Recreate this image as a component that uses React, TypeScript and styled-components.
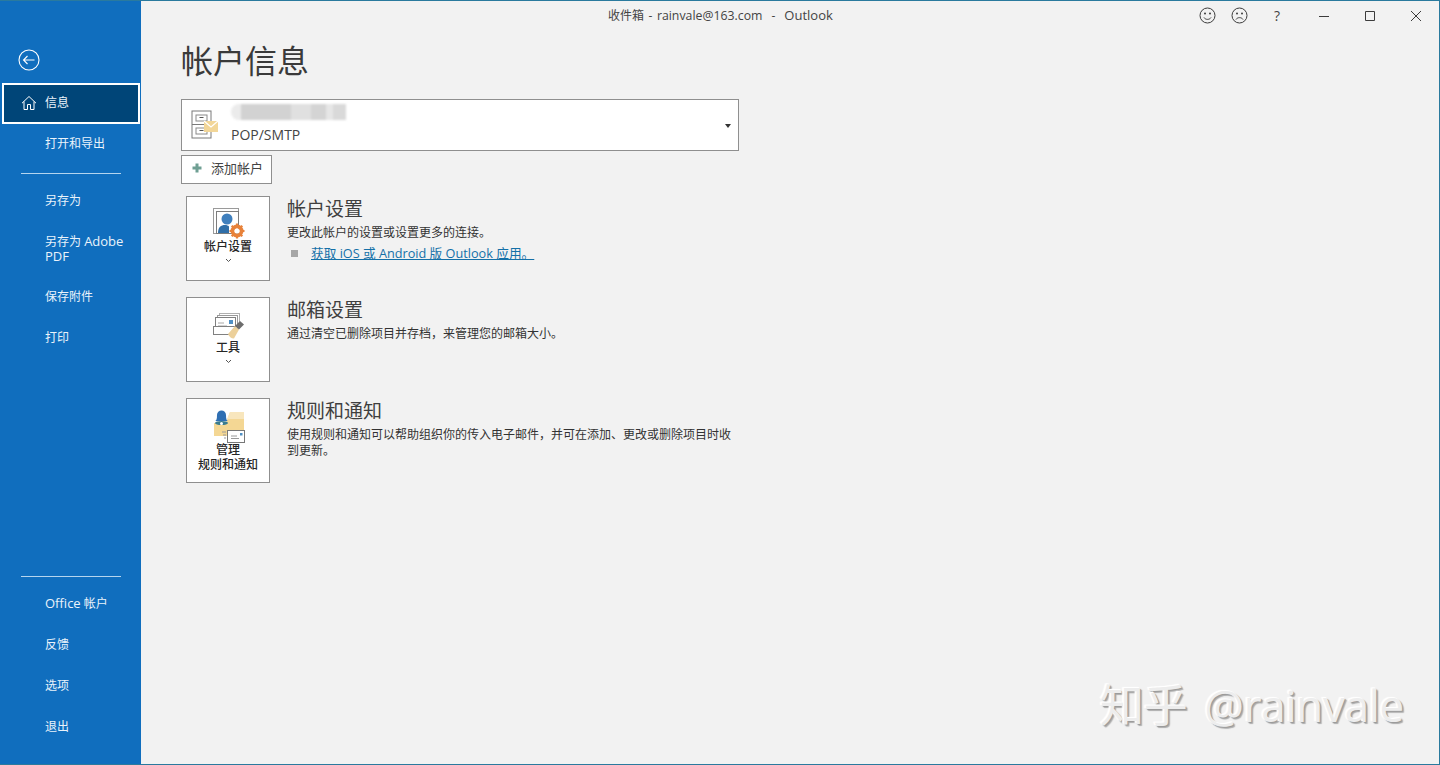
import React from "react";
import styled, { createGlobalStyle } from "styled-components";

const Global = createGlobalStyle`
  html, body { margin: 0; padding: 0; height: 100%; overflow: hidden; background: #f2f2f2; }
  #root { height: 100%; }
  * { box-sizing: border-box; }
`;

const FONT = `"Open Sans", "Noto Sans CJK SC", sans-serif`;

const Window = styled.div`
  position: relative;
  display: flex;
  width: 1440px;
  height: 765px;
  border: 1px solid #2a7a9e;
  border-left: 0;
  font-family: ${FONT};
  font-size: 12px;
  color: #444;
  background: #f2f2f2;
`;

const Sidebar = styled.nav`
  width: 141px;
  flex: none;
  display: flex;
  flex-direction: column;
  justify-content: space-between;
  padding-bottom: 16px;
  background: #106ebe;
  color: #fff;
`;

const SideGroup = styled.div`
  display: flex;
  flex-direction: column;
`;

const BackButton = styled.div`
  display: flex;
  align-items: center;
  height: 82px;
  padding: 36px 0 0 18px;
`;

const NavItem = styled.div<{ $active?: boolean }>`
  display: flex;
  align-items: center;
  gap: 8px;
  min-height: 41px;
  margin: 0 1px 0 2px;
  padding: 0 10px 2px ${(p) => (p.$active ? "17px" : "43px")};
  font-size: 12px;
  line-height: 15px;
  color: #eaf3fb;
  background: ${(p) => (p.$active ? "#004578" : "transparent")};
  border: ${(p) => (p.$active ? "2px solid #fff" : "0")};
`;

const TallNavItem = styled(NavItem)`
  display: block;
  min-height: 55px;
  padding-top: 12px;
  padding-right: 0;
`;

const Latin = styled.span<{ $size?: number }>`
  font-size: ${(p) => p.$size ?? 13}px;
`;

const NavLine = styled.span`
  display: block;
  height: 15px;
  line-height: 15px;
  white-space: pre;
`;

const Divider = styled.hr<{ $top?: number; $bottom?: number }>`
  width: 100px;
  height: 1px;
  margin: ${(p) => p.$top ?? 8}px 0 ${(p) => p.$bottom ?? 6}px 21px;
  border: 0;
  background: #b5d5ef;
`;

const Main = styled.main`
  flex: 1;
  min-width: 0;
  display: flex;
  flex-direction: column;
`;

const TitleBar = styled.header`
  display: flex;
  align-items: center;
  height: 29px;
  padding-left: 467px;
  color: #444;
`;

const WindowTitle = styled.span`
  width: 583px;
  flex: none;
  font-size: 12px;
  word-spacing: 1.4px;
  white-space: pre;
  padding-bottom: 2px;
`;

const Controls = styled.div`
  display: flex;
  align-items: center;
`;

const ControlCell = styled.span<{ $w: number }>`
  width: ${(p) => p.$w}px;
  height: 29px;
  display: flex;
  align-items: center;
  justify-content: center;
  color: #444;
  font-size: 14px;
`;

const Content = styled.div`
  padding: 0 0 0 40px;
  display: flex;
  flex-direction: column;
  align-items: flex-start;
`;

const PageTitle = styled.h1`
  margin: 7px 0 14px;
  font-size: 32px;
  line-height: 48px;
  font-weight: 400;
  color: #3a3a3a;
`;

const AccountSelect = styled.div`
  position: relative;
  display: flex;
  align-items: center;
  width: 558px;
  height: 52px;
  padding-left: 9px;
  background: #fff;
  border: 1px solid #8f8f8f;
`;

const AccountText = styled.div`
  margin-left: 12px;
  display: flex;
  flex-direction: column;
  gap: 6px;
  padding-bottom: 3px;
`;

const Redacted = styled.div`
  display: flex;
  height: 16px;
  width: 115px;
  border-radius: 8px 0 0 8px;
  overflow: hidden;
  filter: blur(0.8px);
`;

const RedactedCell = styled.span<{ $w: number; $c: string }>`
  width: ${(p) => p.$w}px;
  background: ${(p) => p.$c};
`;

const AccountType = styled.div`
  font-size: 14px;
  line-height: 18px;
  color: #444;
`;

const Caret = styled.span`
  position: absolute;
  right: 7px;
  top: 24px;
  border-left: 3.5px solid transparent;
  border-right: 3.5px solid transparent;
  border-top: 4px solid #333;
`;

const AddButton = styled.div`
  display: flex;
  align-items: center;
  width: 91px;
  height: 29px;
  margin: 4px 0 12px;
  padding: 0 0 4px 10px;
  gap: 9px;
  background: #fff;
  border: 1px solid #8f8f8f;
  font-size: 13px;
  color: #444;
`;

const SectionList = styled.div`
  display: flex;
  flex-direction: column;
  gap: 16px;
  margin-left: 5px;
`;

const Section = styled.section`
  display: flex;
  gap: 17px;
`;

const Tile = styled.div<{ $pad: number }>`
  flex: none;
  width: 84px;
  height: 85px;
  display: flex;
  flex-direction: column;
  align-items: center;
  padding-top: ${(p) => p.$pad}px;
  background: #fff;
  border: 1px solid #8f8f8f;
  color: #262626;
`;

const TileIcon = styled.div`
  margin-left: 2px;
  line-height: 0;
`;

const TileLabel = styled.div`
  font-size: 12px;
  line-height: 15px;
  font-weight: 500;
  text-align: center;
  white-space: pre-line;
  margin-top: -1px;
`;

const Chevron = styled.svg`
  margin-top: 4px;
  display: block;
`;

const SectionBody = styled.div`
  width: 450px;
  padding-top: 1px;
`;

const SectionHeading = styled.h2`
  margin: 0 0 4px;
  font-size: 19px;
  line-height: 24px;
  font-weight: 400;
  color: #3f3f3f;
`;

const Description = styled.p`
  margin: 0;
  font-size: 12px;
  line-height: 16px;
  color: #333;
`;

const LinkRow = styled.div`
  display: flex;
  align-items: center;
  gap: 13px;
  margin: 4px 0 0 4px;
`;

const Bullet = styled.span`
  width: 7px;
  height: 7px;
  background: #a6a6a6;
`;

const Link = styled.a`
  font-size: 12.7px;
  line-height: 16px;
  color: #1470a8;
  text-decoration: underline;
`;

const Watermark = styled.div`
  position: absolute;
  right: 35px;
  top: 676px;
  font-size: 44px;
  line-height: 56px;
  font-weight: 400;
  white-space: pre;
  color: #ededed;
  letter-spacing: -0.3px;
  word-spacing: 6px;
  text-shadow: -1px -1px 0 #fff, -2px -1px 1px #fff, 1px 1px 1px #999, 2px 2px 1px #b0b0b0;
`;

const NAV_MID = ["保存附件", "打印"];
const NAV_BOTTOM = ["反馈", "选项", "退出"];

const ChevronIcon = () => (
  <Chevron width="7" height="5" viewBox="0 0 7 5">
    <path d="M1 1l2.5 2.5L6 1" fill="none" stroke="#555" strokeWidth="1" />
  </Chevron>
);

const BackIcon = () => (
  <svg width="22" height="22" viewBox="0 0 22 22" fill="none" stroke="#fff" strokeWidth="1.1">
    <circle cx="11" cy="11" r="10" />
    <path d="M5.5 11h11M9.5 7l-4 4 4 4" />
  </svg>
);

const HomeIcon = () => (
  <svg width="16" height="16" viewBox="0 0 16 16" fill="none" stroke="#fff" strokeWidth="1">
    <path d="M1 8.200L8 1.500l7 6.700M3 6.500v8h3.500v-5h3v5H13v-8" />
  </svg>
);

const FileMailIcon = () => (
  <svg width="28" height="30" viewBox="0 0 28 30">
    <rect x="1" y="1" width="19" height="27" fill="#fff" stroke="#7a7a7a" />
    <path d="M1 14.500h19" stroke="#7a7a7a" />
    <rect x="5" y="5" width="11" height="6" fill="none" stroke="#8a8a8a" />
    <rect x="5" y="18" width="11" height="6" fill="none" stroke="#8a8a8a" />
    <path d="M8.500 7.500h4M8.500 20.500h4" stroke="#555" />
    <rect x="13" y="11" width="14" height="11" fill="#f2d698" />
    <path d="M13 11l7 6 7-6" fill="none" stroke="#fff" strokeWidth="1.200" />
  </svg>
);

const PlusIcon = () => (
  <svg width="10" height="10" viewBox="0 0 10 10">
    <path d="M3.500 0.500h3v3h3v3h-3v3h-3v-3h-3v-3h3z" fill="#6f9f93" />
  </svg>
);

const AccountIcon = () => (
  <svg width="32" height="32" viewBox="0 0 32 32">
    <rect x="0.500" y="0.500" width="25" height="25" fill="#fff" stroke="#9a9a9a" />
    <rect x="3.500" y="3.500" width="22" height="22" fill="#fff" stroke="#7d7d7d" />
    <circle cx="14" cy="11" r="5.500" fill="#3f7fbd" />
    <path d="M5 25c0-6 3-8 7-8 2 0 3 .500 4 1.500V25z" fill="#2f6ea8" />
    <circle cx="24" cy="23" r="4.500" fill="none" stroke="#e8823a" strokeWidth="4" />
    <path d="M24 15.500v15M16.500 23h15M18.700 17.700l10.600 10.600M29.300 17.700L18.700 28.300" stroke="#e8823a" strokeWidth="2.200" strokeDasharray="3 9 3" />
    <circle cx="24" cy="23" r="2.500" fill="#fff" />
  </svg>
);

const ToolsIcon = () => (
  <svg width="32" height="28" viewBox="0 0 32 28">
    <rect x="6.500" y="0.500" width="20" height="14" fill="#fff" stroke="#b0b0b0" />
    <rect x="4.500" y="2.500" width="20" height="14" fill="#fff" stroke="#9a9a9a" />
    <rect x="2.500" y="4.500" width="20" height="14" fill="#fff" stroke="#808080" />
    <rect x="16" y="7" width="4" height="4" fill="#4f8fc4" />
    <path d="M5 10h6M5 13h9" stroke="#a8a8a8" />
    <rect x="0.500" y="13.500" width="22" height="8" fill="#fff" stroke="#808080" />
    <path d="M15 21l7-8 4 3.500-5 9c-3 0-5-2-6-4.500z" fill="#ecd09a" />
    <path d="M22 13l5-5 4 3.500-5 5z" fill="#6d6d6d" />
  </svg>
);

const RulesIcon = () => (
  <svg width="32" height="34" viewBox="0 0 32 34">
    <path d="M1 14h12l4-11h14v24H1z" fill="#f4d794" />
    <path d="M17 3h14v7H14z" fill="#f8e6bd" />
    <path d="M1.500 12c2 0 2.500-2 2.500-6a4.500 4.500 0 0 1 9 0c0 4 .500 6 2.500 6z" fill="#2f6fb3" />
    <ellipse cx="8.500" cy="14" rx="6.500" ry="2" fill="#3a7c8f" />
    <circle cx="8.500" cy="14.500" r="1.500" fill="#fff" />
    <rect x="14.500" y="21.500" width="17" height="12" fill="#fff" stroke="#777" />
    <rect x="27" y="24" width="2.500" height="2.500" fill="#4f8fc4" />
    <path d="M18 27h6M18 29.500h8M9 23h4M10 26h3M11 29h2" stroke="#9a9a9a" />
  </svg>
);

const Smile = ({ sad }: { sad?: boolean }) => (
  <svg width="17" height="17" viewBox="0 0 17 17" fill="none" stroke="#3c3c3c" strokeWidth="1">
    <circle cx="8.500" cy="8.500" r="7.500" />
    <circle cx="6" cy="6.500" r="1" fill="#3c3c3c" stroke="none" />
    <circle cx="11" cy="6.500" r="1" fill="#3c3c3c" stroke="none" />
    <path d={sad ? "M5 12.500c1.500-2.500 5.500-2.500 7 0" : "M5 10.500c1.500 2.500 5.500 2.500 7 0"} />
  </svg>
);

const Glyph = ({ d }: { d: string }) => (
  <svg width="12" height="12" viewBox="0 0 12 12" fill="none" stroke="#3c3c3c" strokeWidth="1">
    <path d={d} />
  </svg>
);

const accountCells: [number, string][] = [
  [10, "#ebebeb"], [50, "#d2d2d2"], [20, "#e0e0e0"], [15, "#d4d4d4"], [7, "#e6e6e6"], [13, "#d9d9d9"],
];

export default function App() {
  return (
    <Window>
      <Global />
      <Sidebar>
        <SideGroup>
          <BackButton><BackIcon /></BackButton>
          <NavItem $active><HomeIcon />信息</NavItem>
          <NavItem>打开和导出</NavItem>
          <Divider $top={8} $bottom={7} />
          <NavItem>另存为</NavItem>
          <TallNavItem>
            <NavLine>另存为 <Latin>Adobe</Latin></NavLine>
            <NavLine><Latin>PDF</Latin></NavLine>
          </TallNavItem>
          {NAV_MID.map((t) => <NavItem key={t}>{t}</NavItem>)}
        </SideGroup>
        <SideGroup>
          <Divider $top={0} $bottom={7} />
          <NavItem><span><Latin>Office</Latin> 帐户</span></NavItem>
          {NAV_BOTTOM.map((t) => <NavItem key={t}>{t}</NavItem>)}
        </SideGroup>
      </Sidebar>
      <Main>
        <TitleBar>
          <WindowTitle>收件箱 - <Latin $size={12.3}>rainvale@163.com</Latin>{"  -  "}<Latin $size={13}>Outlook</Latin></WindowTitle>
          <Controls>
            <ControlCell $w={32}><Smile /></ControlCell>
            <ControlCell $w={32}><Smile sad /></ControlCell>
            <ControlCell $w={44}>?</ControlCell>
            <ControlCell $w={50}><Glyph d="M1 6.500h10" /></ControlCell>
            <ControlCell $w={42}><Glyph d="M1.500 1.500h9v9h-9z" /></ControlCell>
            <ControlCell $w={50}><Glyph d="M1 1l10 10M11 1L1 11" /></ControlCell>
          </Controls>
        </TitleBar>
        <Content>
          <PageTitle>帐户信息</PageTitle>
          <AccountSelect>
            <FileMailIcon />
            <AccountText>
              <Redacted>
                {accountCells.map(([w, c], i) => <RedactedCell key={i} $w={w} $c={c} />)}
              </Redacted>
              <AccountType>POP/SMTP</AccountType>
            </AccountText>
            <Caret />
          </AccountSelect>
          <AddButton><PlusIcon />添加帐户</AddButton>
          <SectionList>
            <Section>
              <Tile $pad={11}>
                <TileIcon><AccountIcon /></TileIcon>
                <TileLabel>帐户设置</TileLabel>
                <ChevronIcon />
              </Tile>
              <SectionBody>
                <SectionHeading>帐户设置</SectionHeading>
                <Description>更改此帐户的设置或设置更多的连接。</Description>
                <LinkRow>
                  <Bullet />
                  <Link>获取 iOS 或 Android 版 Outlook 应用。</Link>
                </LinkRow>
              </SectionBody>
            </Section>
            <Section>
              <Tile $pad={15}>
                <TileIcon><ToolsIcon /></TileIcon>
                <TileLabel>工具</TileLabel>
                <ChevronIcon />
              </Tile>
              <SectionBody>
                <SectionHeading>邮箱设置</SectionHeading>
                <Description>通过清空已删除项目并存档，来管理您的邮箱大小。</Description>
              </SectionBody>
            </Section>
            <Section>
              <Tile $pad={10}>
                <TileIcon><RulesIcon /></TileIcon>
                <TileLabel>{"管理\n规则和通知"}</TileLabel>
              </Tile>
              <SectionBody>
                <SectionHeading>规则和通知</SectionHeading>
                <Description>使用规则和通知可以帮助组织你的传入电子邮件，并可在添加、更改或删除项目时收到更新。</Description>
              </SectionBody>
            </Section>
          </SectionList>
        </Content>
      </Main>
      <Watermark>{"知乎 @rainvale"}</Watermark>
    </Window>
  );
}
